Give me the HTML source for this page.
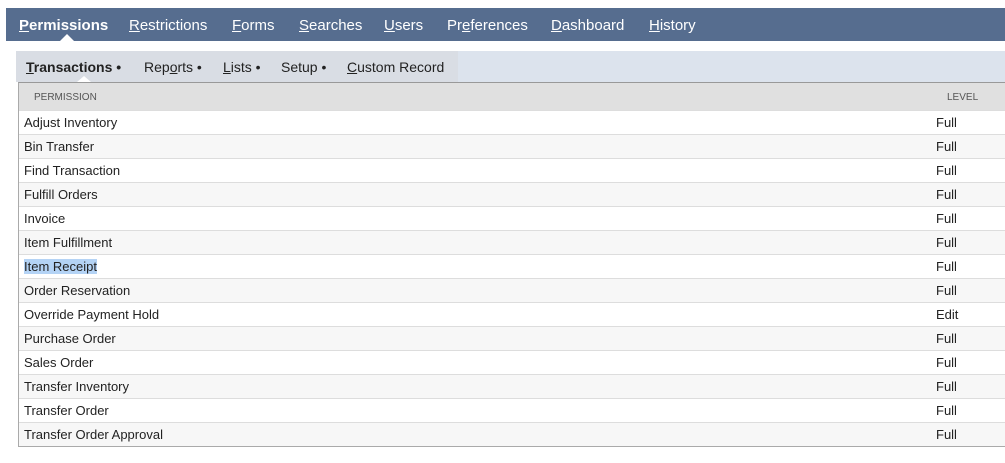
<!DOCTYPE html>
<html><head><meta charset="utf-8"><style>
*{margin:0;padding:0;box-sizing:border-box}
body{width:1005px;height:463px;background:#fff;font-family:"Liberation Sans",sans-serif;position:relative;overflow:hidden;color:#222}
.top{position:absolute;left:6px;top:8px;width:999px;height:33px;background:#566d8f}
.top span{position:absolute;top:9px;color:#fff;font-size:15px}
.top u{text-decoration:underline}
.sub{position:absolute;left:16px;top:51px;width:989px;height:31px;background:#dce3ed}
.subt{position:absolute;left:0;top:0;width:442px;height:31px;background:#d9dde4}
.sub span{position:absolute;top:8px;color:#222;font-size:14px}
.tri{position:absolute;width:0;height:0;border-left:7px solid transparent;border-right:7px solid transparent}
.tbl{position:absolute;left:18px;top:82px;width:987px;height:365px;border:1px solid #aaa;border-right:none;border-top:1px solid #999}
.hd{height:27px;background:#e0e0e0;font-size:10px;color:#555;position:relative}
.hd span{position:absolute;top:9px}
.r{height:24px;border-top:1px solid #ddd;position:relative;font-size:13px;background:#fff}
.r span{position:absolute;top:4px}
.r:nth-child(even){background:#f7f7f7}
.l{left:5px}.v{left:917px}
.sel{background:#b4d3f5}
</style></head><body>
<div class="top">
<span style="left:13px;font-weight:bold"><u>P</u>ermissions</span>
<span style="left:123px"><u>R</u>estrictions</span>
<span style="left:226px"><u>F</u>orms</span>
<span style="left:293px"><u>S</u>earches</span>
<span style="left:378px"><u>U</u>sers</span>
<span style="left:441px">Pr<u>e</u>ferences</span>
<span style="left:545px"><u>D</u>ashboard</span>
<span style="left:643px"><u>H</u>istory</span>
<div class="tri" style="left:54px;top:26px;border-bottom:7px solid #fff"></div>
</div>
<div class="sub"><div class="subt"></div>
<span style="left:10px;font-weight:bold"><u>T</u>ransactions •</span>
<span style="left:128px">Rep<u>o</u>rts •</span>
<span style="left:207px"><u>L</u>ists •</span>
<span style="left:265px">Setup •</span>
<span style="left:331px"><u>C</u>ustom Record</span>
<div class="tri" style="left:61px;top:25px;border-bottom:6px solid #fff"></div>
</div>
<div class="tbl">
<div class="hd"><span style="left:15px">PERMISSION</span><span style="left:928px">LEVEL</span></div>
<div class="rows">
<div class="r"><span class="l">Adjust Inventory</span><span class="v">Full</span></div>
<div class="r"><span class="l">Bin Transfer</span><span class="v">Full</span></div>
<div class="r"><span class="l">Find Transaction</span><span class="v">Full</span></div>
<div class="r"><span class="l">Fulfill Orders</span><span class="v">Full</span></div>
<div class="r"><span class="l">Invoice</span><span class="v">Full</span></div>
<div class="r"><span class="l">Item Fulfillment</span><span class="v">Full</span></div>
<div class="r"><span class="l sel">Item Receipt</span><span class="v">Full</span></div>
<div class="r"><span class="l">Order Reservation</span><span class="v">Full</span></div>
<div class="r"><span class="l">Override Payment Hold</span><span class="v">Edit</span></div>
<div class="r"><span class="l">Purchase Order</span><span class="v">Full</span></div>
<div class="r"><span class="l">Sales Order</span><span class="v">Full</span></div>
<div class="r"><span class="l">Transfer Inventory</span><span class="v">Full</span></div>
<div class="r"><span class="l">Transfer Order</span><span class="v">Full</span></div>
<div class="r"><span class="l">Transfer Order Approval</span><span class="v">Full</span></div>
</div></div>
</body></html>
